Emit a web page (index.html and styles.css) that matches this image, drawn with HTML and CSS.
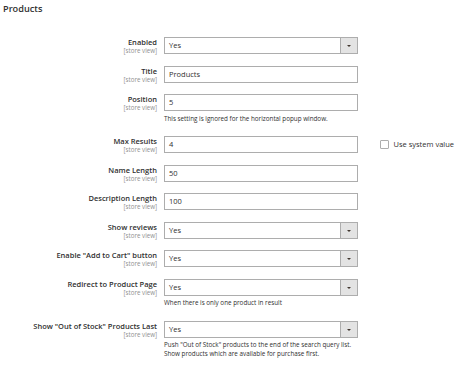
FILE: index.html
```html
<!DOCTYPE html>
<html>
<head>
<meta charset="utf-8">
<link rel="stylesheet" href="styles.css">
</head>
<body>
<div class="section">
  <h2 class="title">Products</h2>
  <div class="form">
    <div class="row">
      <div class="label"><span class="name">Enabled</span><span class="scope">[store view]</span></div>
      <div class="control"><div class="field select"><span class="val">Yes</span><span class="btn"><i class="arrow"></i></span></div></div>
    </div>
    <div class="row">
      <div class="label"><span class="name">Title</span><span class="scope">[store view]</span></div>
      <div class="control"><div class="field"><span class="val">Products</span></div></div>
    </div>
    <div class="row">
      <div class="label"><span class="name">Position</span><span class="scope">[store view]</span></div>
      <div class="control"><div class="field"><span class="val">5</span></div>
        <p class="note">This setting is ignored for the horizontal popup window.</p></div>
    </div>
    <div class="row">
      <div class="label"><span class="name">Max Results</span><span class="scope">[store view]</span></div>
      <div class="control"><div class="field"><span class="val">4</span></div></div>
      <div class="extra"><span class="check"></span><span class="check-label">Use system value</span></div>
    </div>
    <div class="row">
      <div class="label"><span class="name">Name Length</span><span class="scope">[store view]</span></div>
      <div class="control"><div class="field"><span class="val">50</span></div></div>
    </div>
    <div class="row">
      <div class="label"><span class="name">Description Length</span><span class="scope">[store view]</span></div>
      <div class="control"><div class="field"><span class="val">100</span></div></div>
    </div>
    <div class="row">
      <div class="label"><span class="name">Show reviews</span><span class="scope">[store view]</span></div>
      <div class="control"><div class="field select"><span class="val">Yes</span><span class="btn"><i class="arrow"></i></span></div></div>
    </div>
    <div class="row">
      <div class="label"><span class="name">Enable "Add to Cart" button</span><span class="scope">[store view]</span></div>
      <div class="control"><div class="field select"><span class="val">Yes</span><span class="btn"><i class="arrow"></i></span></div></div>
    </div>
    <div class="row">
      <div class="label"><span class="name">Redirect to Product Page</span><span class="scope">[store view]</span></div>
      <div class="control"><div class="field select"><span class="val">Yes</span><span class="btn"><i class="arrow"></i></span></div>
        <p class="note">When there is only one product in result</p></div>
    </div>
    <div class="row">
      <div class="label"><span class="name">Show "Out of Stock" Products Last</span><span class="scope">[store view]</span></div>
      <div class="control"><div class="field select"><span class="val">Yes</span><span class="btn"><i class="arrow"></i></span></div>
        <p class="note">Push "Out of Stock" products to the end of the search query list.<br>Show products which are available for purchase first.</p></div>
    </div>
  </div>
</div>
</body>
</html>
```

FILE: styles.css
```css
html, body {
  margin: 0;
  padding: 0;
  background: #ffffff;
}
body {
  width: 474px;
  height: 367px;
  overflow: hidden;
  font-family: "Open Sans", "Noto Sans", sans-serif;
  color: #303030;
}
.section {
  padding: 2px 0 0 3px;
}
.title {
  margin: 0;
  font-size: 9.2px;
  line-height: 13px;
  font-weight: 600;
  color: #303030;
}
.form {
  margin-left: -3px;
  margin-top: 22px;
  display: flex;
  flex-direction: column;
}
.row {
  display: grid;
  grid-template-columns: 164px 194px auto;
  align-items: start;
  margin-bottom: 11.5px;
}
.label {
  display: flex;
  flex-direction: column;
  align-items: flex-end;
  padding-right: 7px;
  padding-top: 1px;
  height: 17px;
  box-sizing: border-box;
  text-align: right;
}
.name {
  font-size: 7.5px;
  font-weight: 600;
  line-height: 9px;
  color: #303030;
  white-space: nowrap;
}
.scope {
  font-size: 6.2px;
  line-height: 7px;
  color: #8f8f8f;
  white-space: nowrap;
}
.control {
  display: flex;
  flex-direction: column;
}
.field {
  box-sizing: border-box;
  height: 17px;
  border: 1px solid #adadad;
  background: #fff;
  display: flex;
  align-items: center;
}
.val {
  flex: 1;
  padding-left: 4px;
  font-size: 7.5px;
  line-height: 9px;
  color: #303030;
}
.btn {
  width: 16px;
  align-self: stretch;
  background: #e3e3e3;
  border-left: 1px solid #adadad;
  display: flex;
  align-items: center;
  justify-content: center;
}
.arrow {
  display: block;
  width: 0;
  height: 0;
  border-left: 2px solid transparent;
  border-right: 2px solid transparent;
  border-top: 2.5px solid #41362f;
  margin-top: 1px;
}
.note {
  margin: 2.5px 0 2px;
  font-size: 6.3px;
  line-height: 9px;
  color: #303030;
  white-space: nowrap;
}
.extra {
  display: flex;
  align-items: center;
  height: 17px;
  padding-left: 22px;
}
.check {
  box-sizing: border-box;
  width: 9px;
  height: 9px;
  border: 1px solid #adadad;
  border-radius: 1px;
  background: #fff;
}
.check-label {
  margin-left: 4.5px;
  font-size: 7.5px;
  line-height: 9px;
  color: #303030;
  white-space: nowrap;
}
```
